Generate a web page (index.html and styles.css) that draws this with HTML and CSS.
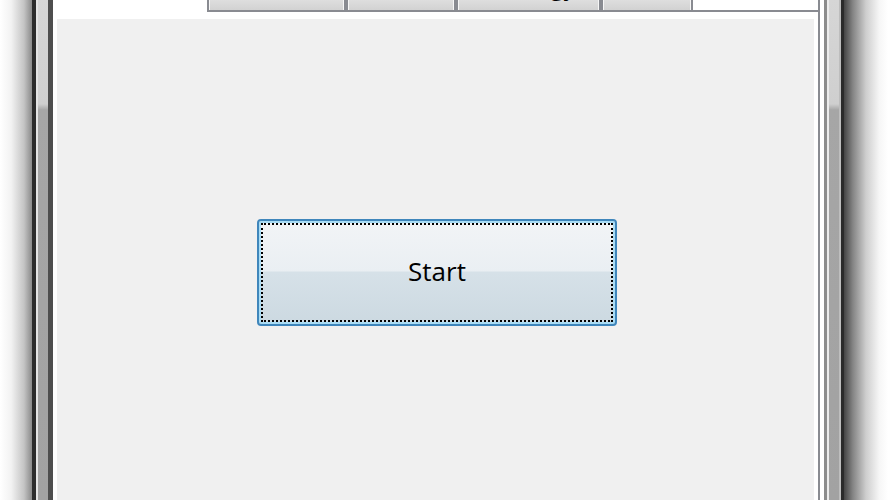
FILE: index.html
```html
<!DOCTYPE html>
<html lang="en">
<head>
    <meta charset="UTF-8">
    <meta name="viewport" content="width=device-width, initial-scale=1">
    <title>Start</title>
    <link rel="stylesheet" href="styles.css">
</head>
<body>
    <div class="window">
        <div class="shade shade-left"></div>
        <div class="frame frame-left"></div>
        <div class="client">
            <div class="tabs">
                <div class="tab selected"><span>Home</span></div>
                <div class="tab tab-2"><span>Monitor</span></div>
                <div class="tab tab-3"><span>Route</span></div>
                <div class="tab tab-4"><span>Strategy</span></div>
                <div class="tab tab-5"><span>Test</span></div>
                <div class="tab-fill"></div>
            </div>
            <div class="panel">
                <div class="page">
                    <button class="start">Start</button>
                </div>
            </div>
        </div>
        <div class="frame frame-right"></div>
        <div class="shade shade-right"></div>
    </div>
</body>
</html>
```

FILE: styles.css
```css
* {
    margin: 0;
    padding: 0;
    box-sizing: border-box;
}

html {
    font-family: "Open Sans", "DejaVu Sans", sans-serif;
}

body {
    height: 500px;
    overflow: hidden;
    background-color: #fff;
}

.window {
    display: flex;
    height: 500px;
}

.shade-left {
    width: 32px;
    background: linear-gradient(to right, #fff 0%, #f2f2f2 35%, #c4c4c4 75%, #8a8a8a 100%);
}

.shade-right {
    width: 44px;
    background: linear-gradient(to right, #444 0%, #848484 20%, #cecece 50%, #f6f6f6 80%, #fff 100%);
}

.frame {
    background: linear-gradient(to bottom, #d6d6d6 0, #cfcfcf 104px, #a6a6a6 110px, #a2a2a2 100%);
}

.frame-left {
    width: 21px;
    border-left: 4px solid #2c2c2c;
    border-right: 5px solid #4e4e4e;
    box-shadow: inset 2px 0 0 #e4e4e4;
}

.frame-right {
    width: 20px;
    border-left: 3px solid #8c8c8c;
    border-right: 3px solid #2a2a2a;
    box-shadow: inset 2px 0 0 #ececec, inset -2px 0 0 #bdbdbd;
}

.client {
    width: 771px;
    padding-right: 4px;
    background-color: #fff;
    display: flex;
    flex-direction: column;
}

.tabs {
    display: flex;
    height: 12px;
}

.tab {
    display: flex;
    align-items: flex-end;
    justify-content: center;
    font-size: 25px;
    color: #000;
}

.tab span {
    line-height: 1;
    margin-bottom: 12px;
}

.tab.selected {
    width: 154px;
    background-color: #fff;
    color: #c8c8c8;
}

.tab-2,
.tab-3,
.tab-4,
.tab-5 {
    border: 2px solid #898b91;
    border-top: none;
    background: linear-gradient(to bottom, #dedede 0, #d2d2d2 100%);
    box-shadow: inset 1px 0 0 #f6f6f6, inset -1px 0 0 #f6f6f6;
}

.tab-2 { width: 139px; }
.tab-3 { width: 110px; }
.tab-4 { width: 145px; }
.tab-5 { width: 92px; }

.tab-fill {
    flex: 1;
    border-bottom: 2px solid #898b91;
    border-right: 2px solid #898b91;
}

.panel {
    flex: 1;
    background-color: #fff;
    border-right: 2px solid #898b91;
    padding: 7px 4px 0 4px;
    display: flex;
}

.page {
    flex: 1;
    background-color: #f0f0f0;
    padding: 200px 0 0 200px;
}

.start {
    width: 360px;
    height: 107px;
    padding-bottom: 3px;
    border: 2px solid #3f86bb;
    border-radius: 4px;
    background: linear-gradient(to bottom, #f2f4f6 0%, #eaeff3 48%, #d6e1e8 50%, #ccd9e1 100%);
    box-shadow: inset 0 0 0 2px #a9dcf4;
    outline: 2px dotted #000;
    outline-offset: -6px;
    font-family: "Open Sans", "DejaVu Sans", sans-serif;
    font-size: 26px;
    font-weight: 500;
    color: #000;
    cursor: pointer;
}
```
